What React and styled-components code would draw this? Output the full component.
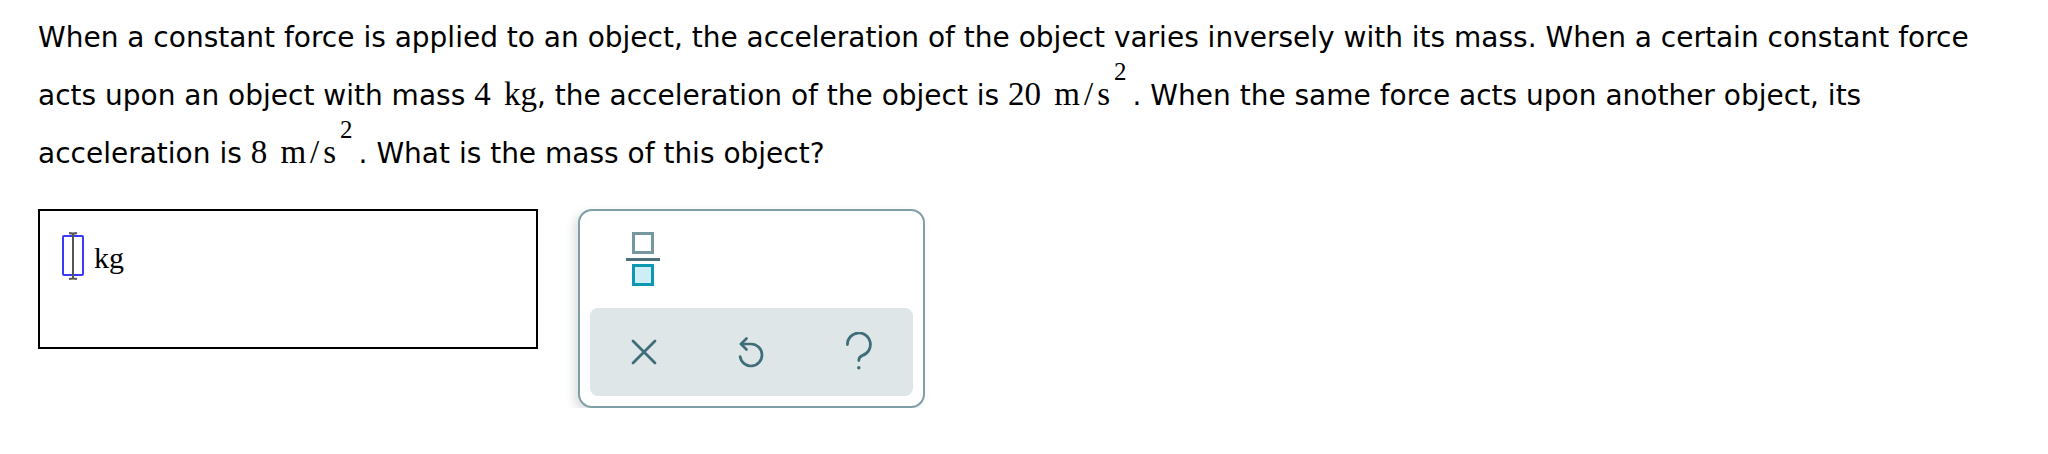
import React from "react";
import styled, { createGlobalStyle } from "styled-components";

const Global = createGlobalStyle`
  html, body {
    margin: 0;
    padding: 0;
    background: #ffffff;
  }
`;

const Page = styled.div`
  padding: 10px 0 0 38px;
`;

const Question = styled.p`
  margin: 0;
  font-family: "DejaVu Sans", Verdana, sans-serif;
  font-size: 28px;
  line-height: 56px;
  color: #000;
  white-space: nowrap;
`;

const MathText = styled.span`
  font-family: "Liberation Serif", "Times New Roman", serif;
  font-size: 33px;
  word-spacing: 5px;
`;

const Slash = styled.span`
  margin: 0 4px;
`;

const Sup = styled.span`
  font-family: "Liberation Serif", "Times New Roman", serif;
  font-size: 25px;
  line-height: 0;
  vertical-align: 25px;
  margin-left: 4px;
  margin-right: 6px;
`;

const AnswerRow = styled.div`
  display: flex;
  align-items: flex-start;
  gap: 40px;
  margin-top: 27px;
`;

const AnswerBox = styled.div`
  box-sizing: border-box;
  width: 500px;
  height: 140px;
  border: 2px solid #000;
  padding: 20px 20px;
  display: flex;
  align-items: flex-start;
  gap: 8px;
`;

const Unit = styled.span`
  font-family: "Liberation Serif", "Times New Roman", serif;
  font-size: 30px;
  line-height: 30px;
  margin-top: 12px;
  color: #000;
`;

const Keypad = styled.div`
  box-sizing: border-box;
  width: 347px;
  height: 199px;
  border: 2px solid #7f9ea5;
  border-radius: 14px;
  background: #fff;
  box-shadow: -4px 4px 10px rgba(40, 60, 70, 0.16);
  padding: 0 10px 10px;
  display: flex;
  flex-direction: column;
`;

const KeyRow = styled.div`
  flex: 1;
  display: grid;
  grid-template-columns: repeat(3, 1fr);
  align-items: center;
  justify-items: center;
`;

const ToolPanel = styled.div`
  height: 88px;
  border-radius: 8px;
  background: #dfe6e8;
  display: grid;
  grid-template-columns: repeat(3, 1fr);
  align-items: center;
  justify-items: center;
`;

const IconButton = styled.div`
  display: flex;
  align-items: center;
  justify-content: center;
  color: #3f6d79;
`;

const FractionIcon = () => (
  <svg width="36" height="56" viewBox="0 0 36 56">
    <rect x="7.5" y="1.5" width="19" height="19" fill="none" stroke="#7598a0" strokeWidth="3" />
    <rect x="0" y="26" width="34" height="3" fill="#4d707b" />
    <rect x="7.5" y="33.5" width="19" height="19" fill="#cdeef4" stroke="#0c98b3" strokeWidth="3" />
  </svg>
);

const CloseIcon = () => (
  <svg width="26" height="26" viewBox="0 0 26 26" fill="none" stroke="currentColor" strokeWidth="2.8" strokeLinecap="round">
    <path d="M2 2 L24 24 M24 2 L2 24" />
  </svg>
);

const UndoIcon = () => (
  <svg width="30" height="32" viewBox="0 0 30 32" fill="none" stroke="currentColor" strokeWidth="2.7" strokeLinecap="round" strokeLinejoin="round">
    <path d="M5 8 H15 A11 11 0 1 1 4.1 20.5" />
    <path d="M10.5 2.5 L5 8 L10.5 13.5" />
  </svg>
);

const HelpIcon = () => (
  <svg width="28" height="40" viewBox="0 0 28 40" fill="none" stroke="currentColor" strokeWidth="2.8" strokeLinecap="round">
    <path d="M2.4 12.5 A11.5 11.5 0 1 1 17.5 23.4 Q13.8 25 13.8 28.5" />
    <circle cx="13.8" cy="35.8" r="1.7" fill="currentColor" stroke="none" />
  </svg>
);

const Cursor = () => (
  <svg width="26" height="50" viewBox="0 0 26 50">
    <rect x="3" y="5" width="20" height="39" fill="none" stroke="#3b3bf5" strokeWidth="2" rx="1" />
    <path d="M13 3 V47 M9 2 Q13 3 17 2 M9 48 Q13 47 17 48" fill="none" stroke="#555" strokeWidth="2" />
  </svg>
);

const App = () => {
  return (
    <Page>
      <Global />
      <Question>
        When a constant force is applied to an object, the acceleration of the object varies inversely with its mass. When a certain constant force
        <br />
        acts upon an object with mass <MathText>4 kg</MathText>, the acceleration of the object is{" "}
        <MathText>
          20 m<Slash>/</Slash>s
        </MathText>
        <Sup>2</Sup>. When the same force acts upon another object, its
        <br />
        acceleration is{" "}
        <MathText>
          8 m<Slash>/</Slash>s
        </MathText>
        <Sup>2</Sup>. What is the mass of this object?
      </Question>
      <AnswerRow>
        <AnswerBox>
          <Cursor />
          <Unit>kg</Unit>
        </AnswerBox>
        <Keypad>
          <KeyRow>
            <IconButton>
              <FractionIcon />
            </IconButton>
          </KeyRow>
          <ToolPanel>
            <IconButton>
              <CloseIcon />
            </IconButton>
            <IconButton>
              <UndoIcon />
            </IconButton>
            <IconButton>
              <HelpIcon />
            </IconButton>
          </ToolPanel>
        </Keypad>
      </AnswerRow>
    </Page>
  );
};

export default App;
